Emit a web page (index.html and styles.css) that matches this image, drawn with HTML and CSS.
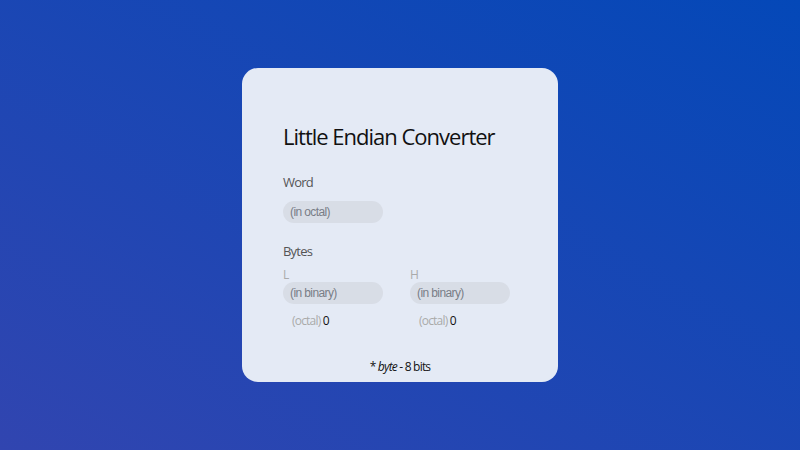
FILE: index.html
```html
<!DOCTYPE html>
<html lang="en">
<head>
    <meta charset="UTF-8">
    <meta name="viewport" content="width=device-width, initial-scale=1.0">
    <title>Little Endian Converter</title>
    <link rel="stylesheet" href="styles.css">
</head>
<body>
    <div class="card">
        <h1>Little Endian Converter</h1>
        <div class="section">
            <h2>Word</h2>
            <input type="text" class="field" placeholder="(in octal)">
        </div>
        <div class="section">
            <h2>Bytes</h2>
            <div class="bytes">
                <div class="byte">
                    <label>L</label>
                    <input type="text" class="field" placeholder="(in binary)">
                    <p class="octal"><span>(octal)</span> 0</p>
                </div>
                <div class="byte">
                    <label>H</label>
                    <input type="text" class="field" placeholder="(in binary)">
                    <p class="octal"><span>(octal)</span> 0</p>
                </div>
            </div>
        </div>
        <p class="note">* <em>byte</em> - 8 bits</p>
    </div>
</body>
</html>
```

FILE: styles.css
```css
body {
    font-family: "Open Sans", sans-serif;
    letter-spacing: -0.05em;
    background: linear-gradient(to top right, #3145b0, #0448b8);
    margin: 0;
    padding: 0;
    height: 100vh;
    display: flex;
    justify-content: center;
    align-items: center;
    overflow: hidden;
}
.card {
    width: 316px;
    height: 314px;
    box-sizing: border-box;
    padding: 53px 41px 0;
    background: #e4eaf5;
    border-radius: 16px;
    display: flex;
    flex-direction: column;
}
h1 {
    font-size: 22px;
    font-weight: 400;
    letter-spacing: -1px;
    color: #111;
    margin: 0 0 21px;
    line-height: 31px;
    white-space: nowrap;
}
h2 {
    font-size: 13px;
    font-weight: 500;
    color: #555;
    margin: 0 0 10px;
    line-height: 18px;
}
.section {
    margin-bottom: 19px;
}
.field {
    display: block;
    width: 100px;
    height: 22px;
    box-sizing: border-box;
    padding: 0 7px;
    border: none;
    border-radius: 11px;
    background: #d8dde6;
    font-family: "Liberation Sans", Arial, sans-serif;
    font-size: 12px;
    letter-spacing: -0.05em;
    color: #333;
    outline: none;
}
.field::placeholder {
    color: #787d86;
}
.bytes {
    display: flex;
    gap: 27px;
    margin-top: -2px;
}
.byte label {
    display: block;
    font-size: 12px;
    line-height: 14px;
    color: #aaa;
}
.octal {
    font-size: 12px;
    color: #111;
    margin: 8px 0 0 9px;
    line-height: 17px;
}
.octal span {
    color: #aaa;
}
.note {
    margin: auto 0 7px;
    text-align: center;
    font-size: 12px;
    line-height: 17px;
    color: #111;
}
```
